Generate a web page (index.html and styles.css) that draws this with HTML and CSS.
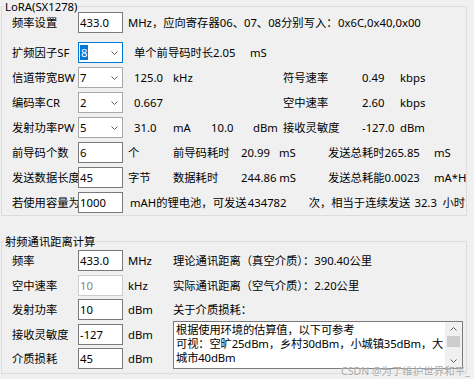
FILE: index.html
```html
<!DOCTYPE html>
<html lang="zh-CN">
<head>
  <meta charset="UTF-8">
  <title>LoRA计算器</title>
  <link rel="stylesheet" href="styles.css">
</head>
<body>
  <fieldset class="group">
    <legend>LoRA(SX1278)</legend>
    <div class="grid lora">
      <span class="c1 tall">频率设置</span>
      <span class="box c2 tall-box">433.0</span>
      <span class="c3 tall">MHz，应向寄存器06、07、08分别写入：</span>
      <span class="c13 tall">0x6C,0x40,0x00</span>

      <span class="c1">扩频因子SF</span>
      <span class="box combo focus c2"><span class="sel">8</span><svg class="arrow" width="7" height="4" viewBox="0 0 7 4"><path d="M0.5 0.5 L3.5 3.5 L6.5 0.5" fill="none" stroke="#606060"/></svg></span>
      <span class="c4">单个前导码时长2.05</span>
      <span class="c8">mS</span>

      <span class="c1">信道带宽BW</span>
      <span class="box combo c2">7<svg class="arrow" width="7" height="4" viewBox="0 0 7 4"><path d="M0.5 0.5 L3.5 3.5 L6.5 0.5" fill="none" stroke="#606060"/></svg></span>
      <span class="c4">125.0</span>
      <span class="c5">kHz</span>
      <span class="c11">符号速率</span>
      <span class="c14">0.49</span>
      <span class="c15">kbps</span>

      <span class="c1">编码率CR</span>
      <span class="box combo c2">2<svg class="arrow" width="7" height="4" viewBox="0 0 7 4"><path d="M0.5 0.5 L3.5 3.5 L6.5 0.5" fill="none" stroke="#606060"/></svg></span>
      <span class="c4">0.667</span>
      <span class="c11">空中速率</span>
      <span class="c14">2.60</span>
      <span class="c15">kbps</span>

      <span class="c1">发射功率PW</span>
      <span class="box combo c2">5<svg class="arrow" width="7" height="4" viewBox="0 0 7 4"><path d="M0.5 0.5 L3.5 3.5 L6.5 0.5" fill="none" stroke="#606060"/></svg></span>
      <span class="c4">31.0</span>
      <span class="c5">mA</span>
      <span class="c6">10.0</span>
      <span class="c9">dBm</span>
      <span class="c11">接收灵敏度</span>
      <span class="c14">-127.0</span>
      <span class="c15">dBm</span>

      <span class="c1">前导码个数</span>
      <span class="box c2">6</span>
      <span class="c3">个</span>
      <span class="c5">前导码耗时</span>
      <span class="c7">20.99</span>
      <span class="c10">mS</span>
      <span class="c12">发送总耗时265.85</span>
      <span class="c16">mS</span>

      <span class="c1">发送数据长度</span>
      <span class="box c2">45</span>
      <span class="c3">字节</span>
      <span class="c5">数据耗时</span>
      <span class="c7">244.86 mS</span>
      <span class="c12">发送总耗能0.0023</span>
      <span class="c16">mA*H</span>

      <span class="c1">若使用容量为</span>
      <span class="box c2">1000</span>
      <span class="c3 battery">
        <span class="b1">mAH的锂电池，可发送</span>
        <span class="b2">434782</span>
        <span class="b3">次，相当于连续发送</span>
        <span class="b4">32.3</span>
        <span>小时</span>
      </span>
    </div>
  </fieldset>

  <fieldset class="group rf">
    <legend>射频通讯距离计算</legend>
    <div class="grid range">
      <span class="c1">频率</span>
      <span class="box c2">433.0</span>
      <span class="c3">MHz</span>
      <span class="c4">理论通讯距离（真空介质）：390.40公里</span>

      <span class="c1">空中速率</span>
      <span class="box disabled c2">10</span>
      <span class="c3">kHz</span>
      <span class="c4">实际通讯距离（空气介质）：2.20公里</span>

      <span class="c1">发射功率</span>
      <span class="box c2">10</span>
      <span class="c3">dBm</span>
      <span class="c4">关于介质损耗：</span>

      <span class="c1">接收灵敏度</span>
      <span class="box c2">-127</span>
      <span class="c3">dBm</span>
      <div class="memo c4">
        <div class="memo-text">根据使用环境的估算值，以下可参考<br>可视：空旷25dBm，乡村30dBm，小城镇35dBm，大城市40dBm</div>
        <div class="scroll">
          <svg width="17" height="14" viewBox="0 0 17 14"><path d="M5.5 8.5 L8.5 5.5 L11.5 8.5" fill="none" stroke="#606060"/></svg>
          <div class="thumb"></div>
          <div class="track"></div>
          <svg width="17" height="14" viewBox="0 0 17 14"><path d="M5.5 5.5 L8.5 8.5 L11.5 5.5" fill="none" stroke="#606060"/></svg>
        </div>
      </div>

      <span class="c1">介质损耗</span>
      <span class="box c2">45</span>
      <span class="c3">dBm</span>
    </div>
  </fieldset>

  <div class="mark">CSDN @为了维护世界和平_</div>
</body>
</html>
```

FILE: styles.css
```css
body {
  margin: 0;
  background: #f0f0f0;
  font-family: "Noto Sans", "Noto Sans CJK SC", sans-serif;
  font-size: 11.3px;
  color: #000;
  position: relative;
  height: 379px;
  overflow: hidden;
}

.group {
  margin: 0 7px 0 1px;
  padding: 0 0 2px 2px;
  border: 1px solid #dcdcdc;
  min-width: 0;
}

.group legend {
  padding: 0 1px;
  line-height: 13px;
}

.group.rf {
  margin-top: 19px;
  padding-bottom: 4px;
}

.grid {
  display: grid;
  margin-left: 8px;
  white-space: nowrap;
}

.grid > span {
  line-height: 21px;
  height: 21px;
}

.lora {
  margin-top: -1px;
  grid-template-columns: 66px 50px 6px 39px 38px 30px 9px 3px 26px 4px 45px 10px 24px 38px 34px 31px;
  grid-template-rows: 26px repeat(7, 21px);
  row-gap: 4px;
}

.range {
  margin-top: 2px;
  grid-template-columns: 66px 50px 45px 290px;
  grid-template-rows: repeat(5, 21px);
  row-gap: 3.5px;
}

.c1 { grid-column: 1; }
.c2 { grid-column: 2; }
.c3 { grid-column: 3; }
.c4 { grid-column: 4; }
.c5 { grid-column: 5; }
.c6 { grid-column: 6; }
.c7 { grid-column: 7; }
.c8 { grid-column: 8; }
.c9 { grid-column: 9; }
.c10 { grid-column: 10; }
.c11 { grid-column: 11; }
.c12 { grid-column: 12; }
.c13 { grid-column: 13; }
.c14 { grid-column: 14; }
.c15 { grid-column: 15; }
.c16 { grid-column: 16; }

.box {
  box-sizing: border-box;
  width: 45px;
  border: 1px solid #7a7a7a;
  background: #fff;
  padding-left: 1px;
  line-height: 19px !important;
}

.combo {
  position: relative;
  border-color: #a8a8a8;
}

.combo.focus {
  border-color: #0078d7;
}

.combo .arrow {
  position: absolute;
  right: 4px;
  top: 8px;
}

.sel {
  display: inline-block;
  background: #0078d7;
  color: #fff;
  line-height: 15px;
  padding: 0 1px;
  margin-top: 2px;
  vertical-align: top;
}

.disabled {
  border-color: #cccccc;
  color: #838383;
}

.battery {
  grid-column: 3 / -1;
  display: flex;
  padding-left: 2px;
}

.b1 { width: 118px; }
.b2 { width: 61px; }
.b3 { width: 106px; }
.b4 { width: 28px; }

.memo {
  grid-row: 4 / 6;
  align-self: start;
  margin-top: -2.5px;
  height: 48px;
  box-sizing: border-box;
  border: 1px solid #7a7a7a;
  background: #fff;
  display: flex;
  white-space: normal;
}

.memo-text {
  flex: 1;
  padding: 1px 0 0 2px;
  line-height: 14px;
  letter-spacing: -0.15px;
  overflow: hidden;
}

.scroll {
  width: 17px;
  background: #f0f0f0;
  display: flex;
  flex-direction: column;
}

.thumb {
  height: 11px;
  margin: 0 2px;
  background: #cdcdcd;
}

.track {
  flex: 1;
}

.mark {
  position: absolute;
  right: 4px;
  bottom: 1px;
  font-size: 10.5px;
  color: rgba(140, 140, 140, 0.75);
  text-shadow: 0 0 2px #fff;
}
```
